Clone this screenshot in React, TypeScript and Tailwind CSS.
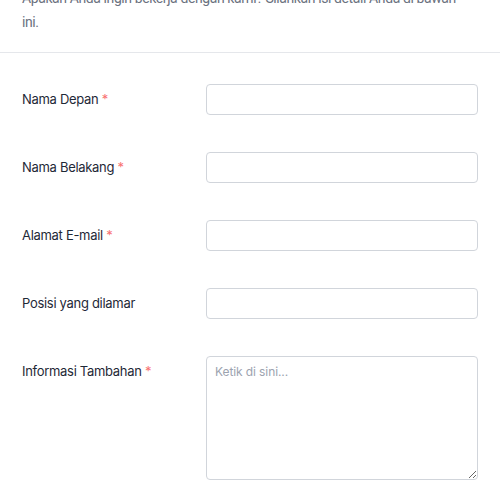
import { useState } from "react";

const fields = [
  { id: "firstName", label: "Nama Depan", required: true },
  { id: "lastName", label: "Nama Belakang", required: true },
  { id: "email", label: "Alamat E-mail", required: true },
  { id: "position", label: "Posisi yang dilamar", required: false },
];

export default function App() {
  const [values, setValues] = useState<Record<string, string>>({});
  const [info, setInfo] = useState("");

  return (
    <div className="bg-white min-h-screen overflow-hidden font-['Inter',sans-serif]">
      <div className="-mt-[14px] px-[22px] pb-[18px] border-b border-[#e5e7eb]">
        <p className="pr-[12px] font-['Roboto',sans-serif] text-[14px] tracking-[-0.4px] leading-[24px] text-[#6b7280]">
          Apakah Anda ingin bekerja dengan kami? Silahkan isi detail Anda di bawah ini.
        </p>
      </div>

      <form className="px-[22px] pt-[31px] flex flex-col gap-[37px]">
        {fields.map((f) => (
          <div key={f.id} className="flex items-center">
            <label htmlFor={f.id} className="w-[184px] shrink-0 text-[13px] tracking-[-0.3px] text-[#1f2937]">
              {f.label}
              {f.required && <span className="text-[#f87171]"> *</span>}
            </label>
            <input
              id={f.id}
              type="text"
              value={values[f.id] || ""}
              onChange={(e) => setValues({ ...values, [f.id]: e.target.value })}
              className="flex-1 h-[31px] px-2 text-[12px] border border-[#d1d5db] rounded-[4px] outline-none"
            />
          </div>
        ))}

        <div className="flex items-start">
          <label htmlFor="info" className="w-[184px] shrink-0 text-[13px] tracking-[-0.3px] leading-[30px] text-[#1f2937]">
            Informasi Tambahan<span className="text-[#f87171]"> *</span>
          </label>
          <textarea
            id="info"
            value={info}
            onChange={(e) => setInfo(e.target.value)}
            placeholder="Ketik di sini..."
            className="flex-1 h-[124px] px-2 py-[6px] text-[12px] tracking-[-0.1px] leading-[18px] border border-[#d1d5db] rounded-[4px] outline-none placeholder:text-[#9ca3af]"
          />
        </div>
      </form>
    </div>
  );
}
